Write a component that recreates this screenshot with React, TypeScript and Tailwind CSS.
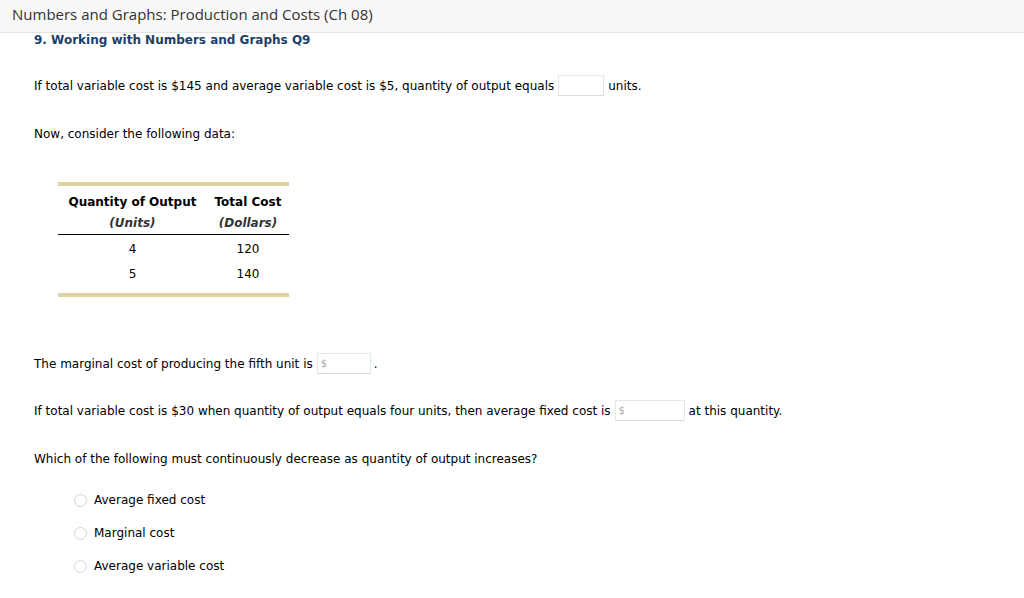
import React from "react";

function Blank({ width, dollar }: { width: string; dollar?: boolean }) {
  return (
    <span
      className={`mx-1 inline-flex h-[21px] items-center border border-[#e6e6e6] border-b-[#d9d9d9] align-middle text-[10px] text-[#aaa] ${width}`}
    >
      {dollar && <span className="pl-[3px]">$</span>}
    </span>
  );
}

function Radio({ label }: { label: string }) {
  return (
    <label className="flex items-center gap-[7px]">
      <span className="inline-block h-[13px] w-[13px] rounded-full border border-[#d4d4d4] bg-white" />
      <span>{label}</span>
    </label>
  );
}

export default function App() {
  return (
    <div className="min-h-[598px] w-[1024px] bg-white text-[12px] leading-[18px] text-black [font-family:'DejaVu_Sans',Verdana,sans-serif]">
      <div className="flex h-[33px] items-center border-b border-[#e3e3e3] bg-[#f8f8f8] pb-[4px] pl-[12px] text-[15px] text-[#333] [font-family:'Open_Sans',sans-serif]">
        Numbers and Graphs: Production and Costs (Ch 08)
      </div>

      <div className="pl-[34px]">
        <div className="-mt-[2px] text-[12px] font-bold text-[#1b3f6b]">
          9. Working with Numbers and Graphs Q9
        </div>

        <p className="mt-[26px] flex items-center">
          If total variable cost is $145 and average variable cost is $5, quantity of output equals
          <Blank width="w-[46px]" />
          units.
        </p>

        <p className="mt-[29px]">Now, consider the following data:</p>

        <div className="ml-[24px] mt-[39px] w-[231px] border-y-4 border-[#ddd3a0] pb-[7px] pt-[5px]">
          <table className="w-full text-center">
            <thead>
              <tr className="font-bold">
                <th className="h-[22px] px-1">Quantity of Output</th>
                <th className="h-[22px] px-1">Total Cost</th>
              </tr>
              <tr className="border-b-[1.5px] border-black font-bold italic text-[#333]">
                <th className="h-[21px]">(Units)</th>
                <th className="h-[21px]">(Dollars)</th>
              </tr>
            </thead>
            <tbody>
              <tr>
                <td className="h-[27px] pt-[2px]">4</td>
                <td className="h-[27px] pt-[2px]">120</td>
              </tr>
              <tr>
                <td className="h-[25px]">5</td>
                <td className="h-[25px]">140</td>
              </tr>
            </tbody>
          </table>
        </div>

        <p className="mt-[56px] flex items-center">
          The marginal cost of producing the fifth unit is
          <Blank width="w-[54px]" dollar />
          <span className="-ml-[1px]">.</span>
        </p>

        <p className="mt-[26px] flex items-center">
          If total variable cost is $30 when quantity of output equals four units, then average fixed cost is
          <Blank width="w-[70px]" dollar />
          at this quantity.
        </p>

        <p className="mt-[29px]">Which of the following must continuously decrease as quantity of output increases?</p>

        <div className="ml-[40px] mt-[23px] flex flex-col gap-[15px]">
          <Radio label="Average fixed cost" />
          <Radio label="Marginal cost" />
          <Radio label="Average variable cost" />
        </div>
      </div>
    </div>
  );
}
